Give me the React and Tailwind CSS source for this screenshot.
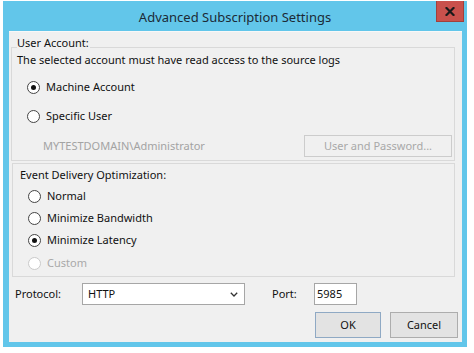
import React from 'react';

const Radio = ({ checked, disabled, label }) => (
  <div className="flex items-center h-[22px]">
    <span
      className={`w-[13px] h-[13px] rounded-full border flex items-center justify-center bg-white ${
        disabled ? 'border-[#cacaca] bg-[#f4f4f4]' : 'border-[#444]'
      }`}
    >
      {checked && <span className="w-[5px] h-[5px] rounded-full bg-[#111]" />}
    </span>
    <span className={`ml-[6px] ${disabled ? 'text-[#a9a9a9]' : 'text-[#111]'}`}>{label}</span>
  </div>
);

export default function App() {
  return (
    <div className="w-[474px] h-[353px] bg-white pl-[3px] pt-[1px] font-['Noto_Sans',sans-serif] text-[11px] leading-[16px]">
      <div className="w-[464px] h-[346px] bg-[#62c6ea] flex flex-col">
        {/* Title bar */}
        <div className="relative h-[30px] flex items-center justify-center">
          <span className="text-[13px] text-[#1c2a36] mt-[2px]">Advanced Subscription Settings</span>
          <button className="absolute top-0 right-[3px] w-[28px] h-[21px] bg-[#c9514c] border border-t-0 border-[#a2403b] flex items-center justify-center">
            <svg width="10" height="9" viewBox="0 0 10 9">
              <path d="M1.5 1 L8.5 8 M8.5 1 L1.5 8" stroke="#1a1a1a" strokeWidth="2.2" strokeLinecap="square" />
            </svg>
          </button>
        </div>

        {/* Body */}
        <div className="flex-1 ml-[6px] mr-[5px] mb-[5px] bg-[#f0f0f0] border-t border-[#f8f8f8] flex flex-col">
          {/* User Account group */}
          <div className="mt-[15px] ml-[2px] mr-[7px] border border-[#d9d9d9] pb-[3px]">
            <div className="-mt-[13px] ml-[5px] w-fit pr-px bg-[#f0f0f0] text-[#111]">User Account:</div>
            <div className="mt-px pl-[5px] text-[#111]">The selected account must have read access to the source logs</div>
            <div className="mt-[8px] pl-[15px]">
              <Radio checked label="Machine Account" />
              <div className="mt-[7px]">
                <Radio label="Specific User" />
              </div>
            </div>
            <div className="mt-[8px] h-[22px] flex items-center justify-between pl-[31px] pr-[2px]">
              <span className="text-[#a3a3a3]">MYTESTDOMAIN\Administrator</span>
              <button className="w-[148px] h-[22px] border border-[#cccccc] bg-[#f0f0f0] text-[#a8a8a8]">
                User and Password...
              </button>
            </div>
          </div>

          {/* Event Delivery group */}
          <div className="mt-[2px] ml-[3px] mr-[7px] border border-[#d9d9d9] pt-[3px] pb-[2px]">
            <div className="pl-[7px] text-[#111]">Event Delivery Optimization:</div>
            <div className="mt-[2px] pl-[15px]">
              <Radio label="Normal" />
              <Radio label="Minimize Bandwidth" />
              <Radio checked label="Minimize Latency" />
              <div className="mt-px">
                <Radio disabled label="Custom" />
              </div>
            </div>
          </div>

          {/* Protocol row */}
          <div className="mt-[6px] pl-[6px] flex items-center h-[22px] text-[#111]">
            <span className="w-[67px]">Protocol:</span>
            <div className="w-[163px] h-[22px] bg-white border border-[#a6a6a6] flex items-center justify-between pl-[5px] pr-[6px]">
              <span>HTTP</span>
              <svg width="8" height="5" viewBox="0 0 8 5">
                <path d="M0.8 0.8 L4 4 L7.2 0.8" stroke="#333" strokeWidth="1.3" fill="none" />
              </svg>
            </div>
            <span className="ml-[27px] w-[42px]">Port:</span>
            <div className="w-[43px] h-[22px] bg-white border border-[#a6a6a6] flex items-center pl-[2px]">5985</div>
          </div>

          {/* Buttons */}
          <div className="mt-[7px] mr-[4px] flex justify-end gap-[9px] text-[#111]">
            <button className="w-[66px] h-[26px] bg-[#e3e3e3] border border-[#8fa9c4]">OK</button>
            <button className="w-[68px] h-[26px] bg-[#e3e3e3] border border-[#adadad]">Cancel</button>
          </div>
        </div>
      </div>
    </div>
  );
}
